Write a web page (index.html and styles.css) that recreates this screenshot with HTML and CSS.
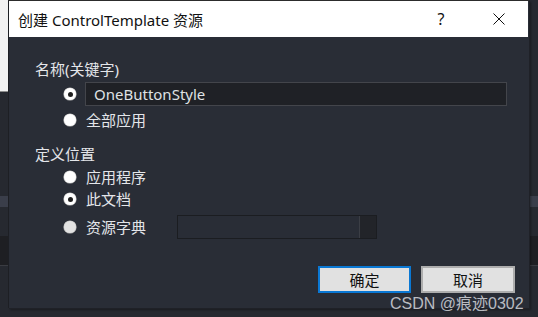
FILE: index.html
```html
<!DOCTYPE html>
<html lang="zh-CN">
<head>
<meta charset="utf-8">
<title>创建 ControlTemplate 资源</title>
<link rel="stylesheet" href="styles.css">
</head>
<body>
<div class="dialog">
  <div class="titlebar">
    <span class="title">创建 ControlTemplate 资源</span>
    <span class="spacer"></span>
    <span class="tb-btn help">?</span>
    <span class="tb-btn close">
      <svg width="12" height="12" viewBox="0 0 12 12"><path d="M0.5 0.5 L11.5 11.5 M11.5 0.5 L0.5 11.5" stroke="#111" stroke-width="1" fill="none"/></svg>
    </span>
  </div>
  <div class="body">
    <div class="content">
      <div class="section-label first">名称(关键字)</div>
      <div class="row row-name">
        <span class="radio checked"></span>
        <div class="textbox">OneButtonStyle</div>
      </div>
      <div class="row row-all">
        <span class="radio"></span>
        <span class="opt-text">全部应用</span>
      </div>
      <div class="section-label second">定义位置</div>
      <div class="row row-app">
        <span class="radio"></span>
        <span class="opt-text">应用程序</span>
      </div>
      <div class="row row-doc">
        <span class="radio checked"></span>
        <span class="opt-text">此文档</span>
      </div>
      <div class="row row-dict">
        <span class="radio disabled"></span>
        <span class="opt-text dict-text">资源字典</span>
        <div class="combo"><span class="combo-main"></span><span class="combo-arrow"></span></div>
      </div>
    </div>
    <div class="footer">
      <button class="btn primary">确定</button>
      <button class="btn">取消</button>
    </div>
  </div>
</div>
<div class="watermark">CSDN @痕迹0302</div>
</body>
</html>
```

FILE: styles.css
```css
html, body {
  margin: 0;
  padding: 0;
}
body {
  width: 538px;
  height: 317px;
  overflow: hidden;
  position: relative;
  font-family: "Noto Sans", "Noto Sans CJK SC", sans-serif;
  background:
    linear-gradient(#f2f2f2, #f2f2f2) 0 0 / 8px 91px no-repeat,
    linear-gradient(#8d8d8d, #8d8d8d) 0 91px / 8px 1px no-repeat,
    linear-gradient(#3a3e4a, #3a3e4a) 0 196px / 100% 11px no-repeat,
    linear-gradient(#1e1f23, #1e1f23) 0 236px / 100% 29px no-repeat,
    linear-gradient(#3a3c42, #3a3c42) 0 265px / 100% 1px no-repeat,
    #262930;
}
.dialog {
  margin-left: 8px;
  width: 521px;
  height: 308px;
  border-left: 1px solid #1d1f24;
  border-top: 1px solid #2c2c2c;
  box-sizing: border-box;
  background: #292d36;
  box-shadow: 1px 1px 0 #1f2127, 2px 2px 2px rgba(0,0,0,0.35);
  display: flex;
  flex-direction: column;
}
.titlebar {
  height: 36px;
  background: #fff;
  display: flex;
  align-items: center;
  padding-left: 9px;
  margin-right: 1px;
}
.title {
  font-family: "Noto Sans", "Noto Sans CJK SC", sans-serif;
  font-size: 15px;
  color: #111;
}
.spacer { flex: 1; }
.tb-btn {
  width: 46px;
  height: 36px;
  display: flex;
  align-items: center;
  justify-content: center;
  color: #111;
}
.help {
  font-size: 16px;
  margin-right: 12px;
}
.close {
  margin-right: 6px;
}
.body {
  flex: 1;
  display: flex;
  flex-direction: column;
}
.content {
  padding: 23px 22px 0 26px;
  color: #e4e6ea;
  font-size: 15px;
}
.section-label {
  height: 18px;
  line-height: 18px;
}
.section-label.second {
  margin-top: 15px;
}
.row {
  display: flex;
  align-items: center;
  padding-left: 29px;
  height: 20px;
}
.row-name {
  margin-top: 4px;
  height: 24px;
}
.row-all { margin-top: 4px; }
.row-app { margin-top: 4px; }
.row-doc { margin-top: 2px; }
.row-dict {
  margin-top: 6px;
  height: 24px;
}
.radio {
  width: 12px;
  height: 12px;
  border-radius: 50%;
  background: #fff;
  box-shadow: 0 0 0 0.6px #bdbdbd;
  box-sizing: border-box;
  position: relative;
  flex: none;
}
.radio.checked::after {
  content: "";
  position: absolute;
  left: 3.5px;
  top: 3.5px;
  width: 5px;
  height: 5px;
  border-radius: 50%;
  background: #1e1e1e;
}
.radio.disabled {
  background: #e2e2e2;
  box-shadow: 0 0 0 0.6px #b8b8b8;
}
.opt-text {
  margin-left: 10px;
  line-height: 20px;
}
.dict-text {
  width: 91px;
  flex: none;
}
.textbox {
  margin-left: 9px;
  flex: 1;
  height: 24px;
  box-sizing: border-box;
  border: 1px solid #43454b;
  background: #1f2126;
  color: #dfe1e4;
  padding-left: 8px;
  line-height: 22px;
  font-size: 15px;
}
.combo {
  width: 200px;
  height: 24px;
  box-sizing: border-box;
  border: 1px solid #1b1d21;
  display: flex;
}
.combo-main {
  flex: 1;
  background: #292d36;
}
.combo-arrow {
  width: 16px;
  background: #222429;
  border-left: 1px solid #3b3e45;
}
.footer {
  display: flex;
  justify-content: flex-end;
  gap: 10px;
  padding-right: 14px;
  margin-top: 27px;
}
.btn {
  font-family: "Noto Sans CJK SC", sans-serif;
  font-size: 15px;
  color: #111;
  background: #e1e1e1;
  border: 2px solid #adadad;
  height: 27px;
  padding: 0;
  line-height: 21px;
  width: 94px;
  margin: 0;
}
.btn.primary {
  border-color: #0a78d4;
  width: 93px;
}
.watermark {
  position: absolute;
  left: 390px;
  top: 290px;
  font-family: "Liberation Sans", "Noto Sans CJK SC", sans-serif;
  font-size: 16px;
  color: rgba(220, 222, 226, 0.82);
  white-space: nowrap;
}
```
